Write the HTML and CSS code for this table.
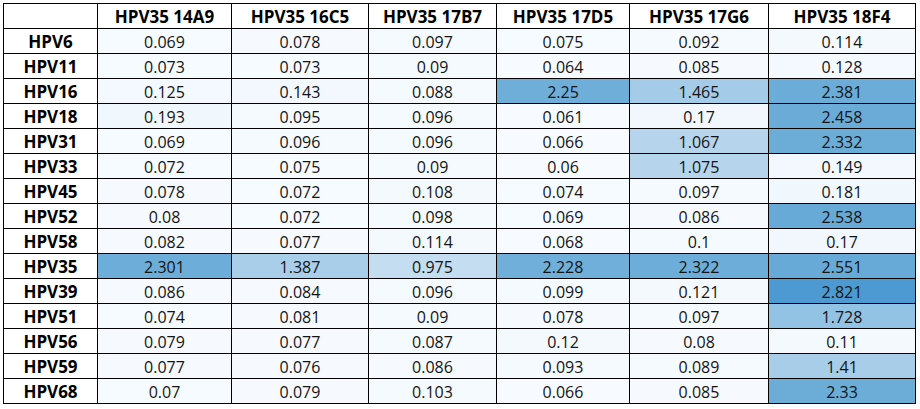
FILE: index.html
```html
<!DOCTYPE html>
<html lang="en">
<head>
<meta charset="utf-8">
<title>HPV35 antibody reactivity</title>
<link rel="stylesheet" href="styles.css">
</head>
<body>
<table class="grid">
  <colgroup>
    <col class="c-label"><col class="c1"><col class="c2"><col class="c3"><col class="c4"><col class="c5"><col class="c6">
  </colgroup>
  <thead>
    <tr><th class="corner"></th><th>HPV35 14A9</th><th>HPV35 16C5</th><th>HPV35 17B7</th><th>HPV35 17D5</th><th>HPV35 17G6</th><th>HPV35 18F4</th></tr>
  </thead>
  <tbody>
    <tr><th>HPV6</th><td>0.069</td><td>0.078</td><td>0.097</td><td>0.075</td><td>0.092</td><td>0.114</td></tr>
    <tr><th>HPV11</th><td>0.073</td><td>0.073</td><td>0.09</td><td>0.064</td><td>0.085</td><td>0.128</td></tr>
    <tr><th>HPV16</th><td>0.125</td><td>0.143</td><td>0.088</td><td>2.25</td><td>1.465</td><td>2.381</td></tr>
    <tr><th>HPV18</th><td>0.193</td><td>0.095</td><td>0.096</td><td>0.061</td><td>0.17</td><td>2.458</td></tr>
    <tr><th>HPV31</th><td>0.069</td><td>0.096</td><td>0.096</td><td>0.066</td><td>1.067</td><td>2.332</td></tr>
    <tr><th>HPV33</th><td>0.072</td><td>0.075</td><td>0.09</td><td>0.06</td><td>1.075</td><td>0.149</td></tr>
    <tr><th>HPV45</th><td>0.078</td><td>0.072</td><td>0.108</td><td>0.074</td><td>0.097</td><td>0.181</td></tr>
    <tr><th>HPV52</th><td>0.08</td><td>0.072</td><td>0.098</td><td>0.069</td><td>0.086</td><td>2.538</td></tr>
    <tr><th>HPV58</th><td>0.082</td><td>0.077</td><td>0.114</td><td>0.068</td><td>0.1</td><td>0.17</td></tr>
    <tr><th>HPV35</th><td>2.301</td><td>1.387</td><td>0.975</td><td>2.228</td><td>2.322</td><td>2.551</td></tr>
    <tr><th>HPV39</th><td>0.086</td><td>0.084</td><td>0.096</td><td>0.099</td><td>0.121</td><td>2.821</td></tr>
    <tr><th>HPV51</th><td>0.074</td><td>0.081</td><td>0.09</td><td>0.078</td><td>0.097</td><td>1.728</td></tr>
    <tr><th>HPV56</th><td>0.079</td><td>0.077</td><td>0.087</td><td>0.12</td><td>0.08</td><td>0.11</td></tr>
    <tr><th>HPV59</th><td>0.077</td><td>0.076</td><td>0.086</td><td>0.093</td><td>0.089</td><td>1.41</td></tr>
    <tr><th>HPV68</th><td>0.07</td><td>0.079</td><td>0.103</td><td>0.066</td><td>0.085</td><td>2.33</td></tr>
  </tbody>
</table>
<script src="script.js"></script>
</body>
</html>
```
FILE: styles.css
```css
* { box-sizing: border-box; }

html, body {
  background: #ffffff;
}

body {
  margin: 3px 0 0 3px;
  font-family: "Open Sans", "Liberation Sans", sans-serif;
  color: #111;
}

.grid {
  border-collapse: separate;
  border-spacing: 0;
  table-layout: fixed;
  width: 913px;
  border-top: 1px solid #000;
  border-left: 1px solid #000;
}

.c-label { width: 94px; }
.c1 { width: 134px; }
.c2 { width: 137px; }
.c3 { width: 128px; }
.c4 { width: 133px; }
.c5 { width: 139px; }
.c6 { width: 147px; }

.grid th,
.grid td {
  height: 25px;
  padding: 0 2px 1px;
  border-right: 1px solid #000;
  border-bottom: 1px solid #000;
  text-align: center;
  vertical-align: bottom;
  line-height: 20px;
  white-space: nowrap;
  overflow: hidden;
}

.grid th {
  background: #ffffff;
  font-weight: 700;
  font-size: 17px;
  color: #000;
}

.grid td {
  background: #f7fbff;
  font-weight: 400;
  font-size: 16px;
  color: #141414;
}
```
FILE: script.js
```js
// Colour each value cell on a light-to-blue scale, like a spreadsheet colour scale.
(function () {
  var stops = [
    [0.06, [247, 251, 255]],
    [0.975, [196, 221, 240]],
    [1.07, [182, 213, 236]],
    [1.465, [164, 204, 232]],
    [1.728, [146, 194, 228]],
    [2.25, [110, 174, 217]],
    [2.55, [104, 170, 215]],
    [2.821, [77, 154, 210]]
  ];
  function colour(v) {
    if (v <= stops[0][0]) return stops[0][1];
    for (var i = 1; i < stops.length; i++) {
      if (v <= stops[i][0]) {
        var a = stops[i - 1], b = stops[i];
        var t = (v - a[0]) / (b[0] - a[0]);
        return a[1].map(function (c, k) { return Math.round(c + (b[1][k] - c) * t); });
      }
    }
    return stops[stops.length - 1][1];
  }
  var cells = document.querySelectorAll('.grid tbody td');
  cells.forEach(function (td) {
    var v = parseFloat(td.textContent);
    var c = colour(v);
    td.style.backgroundColor = 'rgb(' + c.join(',') + ')';
  });
})();
```
